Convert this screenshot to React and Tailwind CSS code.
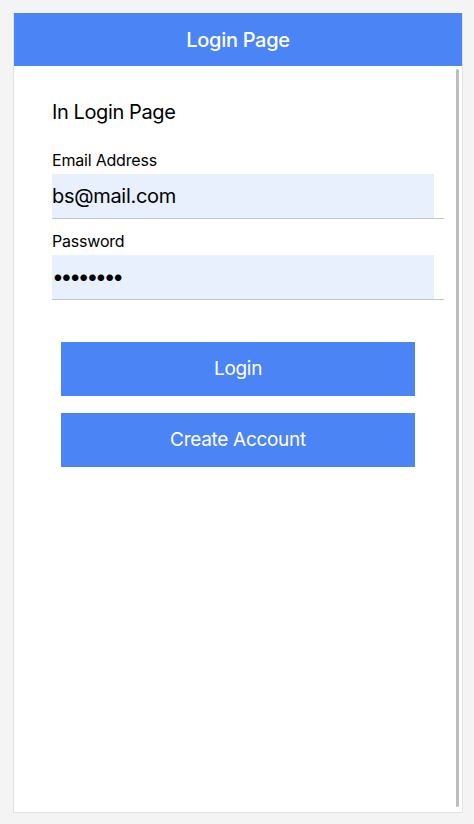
import React from "react";

const font = { fontFamily: "Inter, 'Noto Sans', sans-serif" };

function Field({ label, children, className = "" }) {
  return (
    <div className={className}>
      <div className="text-[16px] leading-[20px] tracking-[-0.2px] text-black">{label}</div>
      <div className="mt-[4px] border-b border-[#c6c6c6]">
        <div className="mr-[10px] flex h-[44px] items-center bg-[#e8f0fe] text-[20px] tracking-[-0.3px] text-black">
          {children}
        </div>
      </div>
    </div>
  );
}

export default function App() {
  return (
    <div
      className="flex h-[824px] w-[474px] bg-[#f4f4f4] pb-[11px] pl-[13px] pr-[11px] pt-[13px]"
      style={font}
    >
      <div className="flex flex-1 flex-col border border-t-0 border-[#e2e2e2] bg-white">
        <div className="flex h-[53px] items-center justify-center bg-[#4b84f5] text-[20px] font-medium tracking-[-0.3px] text-white">
          Login Page
        </div>
        <div className="relative flex-1">
          <div className="pl-[38px] pr-[18px] pt-[34px]">
            <div className="text-[20px] leading-[24px] tracking-[-0.4px] text-black">In Login Page</div>
            <Field label="Email Address" className="mt-[26px]">
              bs@mail.com
            </Field>
            <Field label="Password" className="mt-[12px]">
              <span className="text-[21px] tracking-[-3.2px]">••••••••</span>
            </Field>
          </div>
          <div className="mt-[42px] flex flex-col gap-[17px] px-[47px]">
            <button className="h-[54px] bg-[#4b84f5] text-[19px] tracking-[-0.3px] text-white">Login</button>
            <button className="h-[54px] bg-[#4b84f5] text-[19px] tracking-[-0.3px] text-white">Create Account</button>
          </div>
          <div className="absolute bottom-[5px] right-[3px] top-[3px] w-[3px] rounded-full bg-[#bdbdbd]" />
        </div>
      </div>
    </div>
  );
}
